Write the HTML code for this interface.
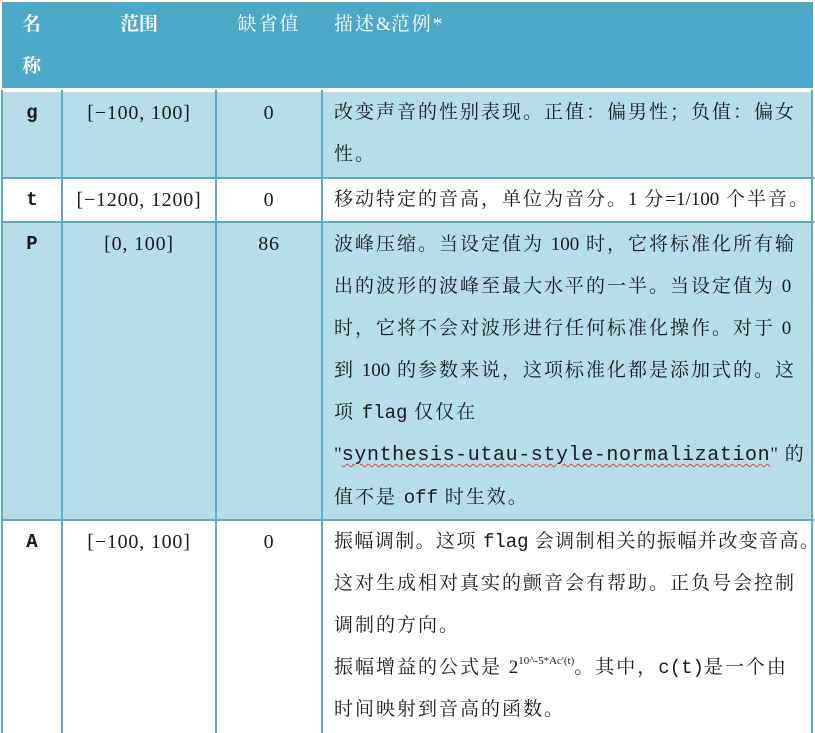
<!DOCTYPE html>
<html><head><meta charset="utf-8"><style>
body{margin:0;width:815px;height:733px;background:#fff;overflow:hidden;position:relative;font-family:"Liberation Serif","Noto Serif CJK SC","Noto Sans CJK SC",serif;color:#1a1a1a;}
.a{position:absolute;}
.hd{background:#4ba8c6;left:2px;top:2px;width:811px;height:86px;}
.lb{background:#b7dde8;}
.vl{position:absolute;width:2px;background:#5aabc6;}
.hl{position:absolute;height:2px;background:#5aabc6;left:2px;width:812px;}
.t{position:absolute;font-size:19px;line-height:42px;white-space:nowrap;}
.d{letter-spacing:2px;}
.c{text-align:center;}
.r{letter-spacing:0.8px;font-size:20px;}
.m{font-family:"Liberation Mono",monospace;font-weight:bold;}
.h{color:#fff;font-size:19px;}
.hb{font-weight:bold;}
.mono{font-family:"Liberation Mono",monospace;letter-spacing:0;font-size:19px;}
.n{letter-spacing:0;}
sup{font-size:11px;line-height:0;vertical-align:9px;letter-spacing:0;}
.sq{text-decoration:underline wavy #d44;text-decoration-thickness:1px;text-underline-offset:3px;font-size:20px;letter-spacing:0.6px;}
</style></head><body>
<div class="a hd"></div>
<div class="a lb" style="left:2px;top:92px;width:811px;height:86px"></div>
<div class="a lb" style="left:2px;top:222px;width:811px;height:298px"></div>
<div class="vl" style="left:1px;top:90px;height:643px"></div>
<div class="vl" style="left:61px;top:90px;height:643px"></div>
<div class="vl" style="left:215px;top:90px;height:643px"></div>
<div class="vl" style="left:321px;top:90px;height:643px"></div>
<div class="vl" style="left:811px;top:90px;height:643px"></div>
<div class="hl" style="top:177px"></div>
<div class="hl" style="top:221px"></div>
<div class="hl" style="top:519px"></div>
<div class="t h hb" style="left:22px;top:4px">名</div>
<div class="t h hb" style="left:22px;top:46px">称</div>
<div class="t h hb c" style="left:62px;width:154px;top:4px">范围</div>
<div class="t h c d" style="left:216px;width:106px;top:4px">缺省值</div>
<div class="t h d" style="left:334px;top:4px">描述<span class="n">&amp;</span>范例*</div>
<div class="t m c" style="left:2px;width:60px;top:92px">g</div>
<div class="t c r" style="left:62px;width:154px;top:92px">[−100, 100]</div>
<div class="t c r" style="left:216px;width:106px;top:92px">0</div>
<div class="t d" style="left:334px;top:92px">改变声音的性别表现。正值：偏男性；负值：偏女<br>性。</div>
<div class="t m c" style="left:2px;width:60px;top:179px">t</div>
<div class="t c r" style="left:62px;width:154px;top:179px">[−1200, 1200]</div>
<div class="t c r" style="left:216px;width:106px;top:179px">0</div>
<div class="t d" style="left:334px;top:179px">移动特定的音高，单位为音分。<span class="n">1</span> 分<span class="n">=1/100</span> 个半音。</div>
<div class="t m c" style="left:2px;width:60px;top:223px">P</div>
<div class="t c r" style="left:62px;width:154px;top:223px">[0, 100]</div>
<div class="t c r" style="left:216px;width:106px;top:223px">86</div>
<div class="t d" style="left:334px;top:224px">波峰压缩。当设定值为 <span class="n">100</span> 时，它将标准化所有输<br>出的波形的波峰至最大水平的一半。当设定值为 0<br>时，它将不会对波形进行任何标准化操作。对于 0<br>到 <span class="n">100</span> 的参数来说，这项标准化都是添加式的。这<br>项 <span class="mono">flag</span> 仅仅在<br><span class="n">"<span class="mono sq">synthesis-utau-style-normalization</span>"</span> 的<br>值不是 <span class="mono">off</span> 时生效。</div>
<div class="t m c" style="left:2px;width:60px;top:521px">A</div>
<div class="t c r" style="left:62px;width:154px;top:521px">[−100, 100]</div>
<div class="t c r" style="left:216px;width:106px;top:521px">0</div>
<div class="t d" style="left:334px;top:521px"><span style="letter-spacing:1.4px">振幅调制。这项 <span class="mono">flag</span> 会调制相关的振幅并改变音高。</span><br>这对生成相对真实的颤音会有帮助。正负号会控制<br>调制的方向。<br>振幅增益的公式是 <span class="n">2<sup>10^-5*Ac'(t)</sup></span>。其中，<span class="mono">c(t)</span>是一个由<br>时间映射到音高的函数。</div>
</body></html>
